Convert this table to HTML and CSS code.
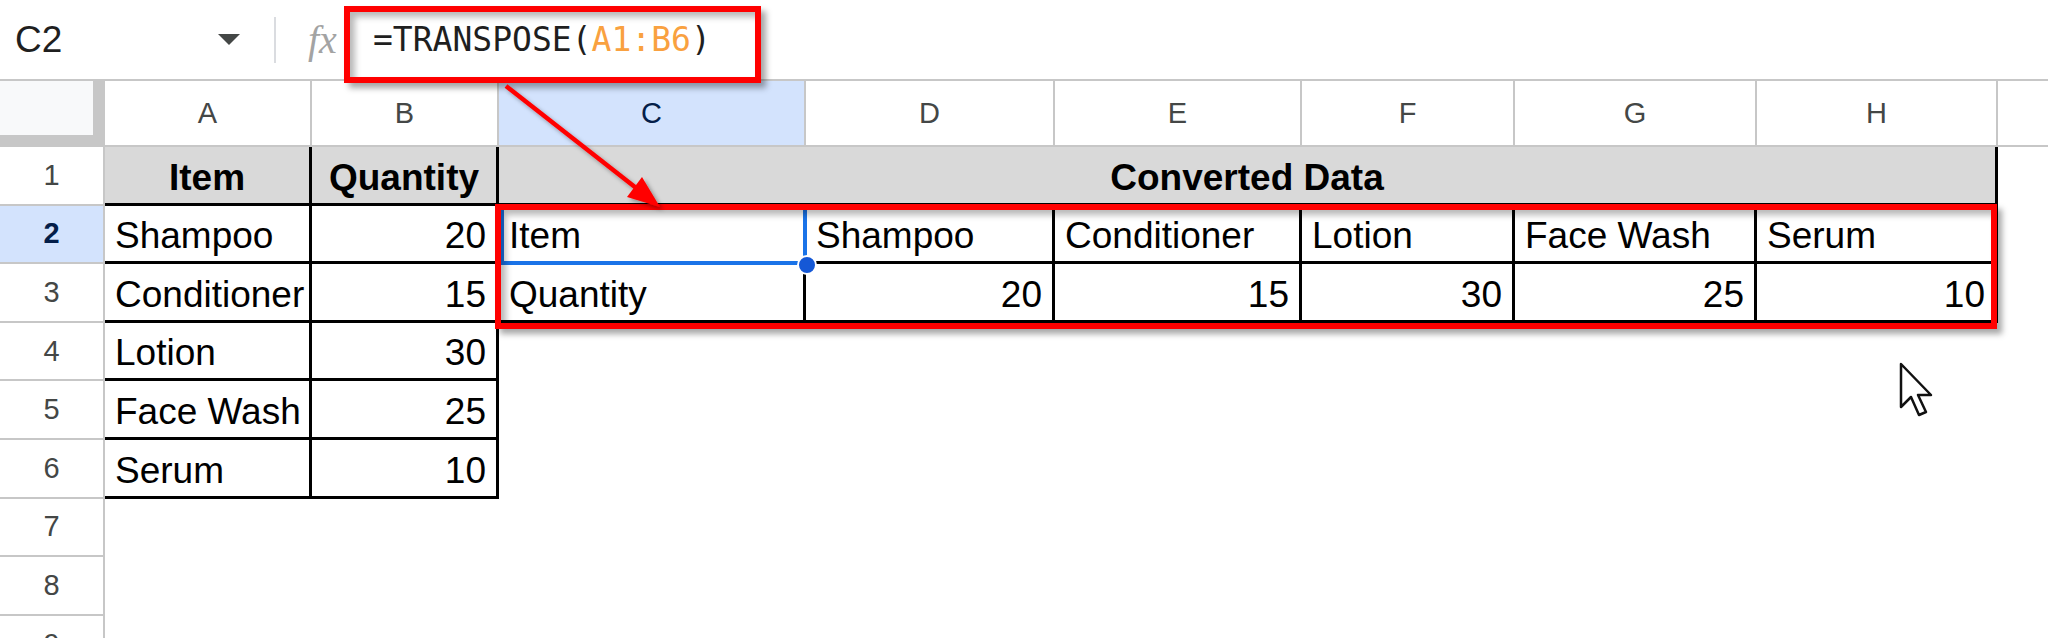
FILE: index.html
```html
<!DOCTYPE html>
<html>
<head>
<meta charset="utf-8">
<link rel="stylesheet" href="styles.css">
</head>
<body>
<div class="app">
  <div class="toolbar">
    <div class="namebox"><span>C2</span><span class="caret"></span></div>
    <div class="sep"></div>
    <div class="fx">fx</div>
    <div class="formula">=TRANSPOSE(<span class="rng">A1:B6</span>)</div>
  </div>

  <div class="sheet">
    <div class="corner"></div>
    <div class="ch">A</div>
    <div class="ch">B</div>
    <div class="ch sel-col">C</div>
    <div class="ch">D</div>
    <div class="ch">E</div>
    <div class="ch">F</div>
    <div class="ch">G</div>
    <div class="ch">H</div>
    <div class="ch last"></div>

    <div class="rh">1</div>
    <div class="c b h">Item</div>
    <div class="c b h">Quantity</div>
    <div class="c b h span6">Converted Data</div>
    <div class="c"></div>

    <div class="rh sel-h">2</div>
    <div class="c b">Shampoo</div>
    <div class="c b n">20</div>
    <div class="c b">Item</div>
    <div class="c b">Shampoo</div>
    <div class="c b">Conditioner</div>
    <div class="c b">Lotion</div>
    <div class="c b">Face Wash</div>
    <div class="c b">Serum</div>
    <div class="c"></div>

    <div class="rh">3</div>
    <div class="c b">Conditioner</div>
    <div class="c b n">15</div>
    <div class="c b">Quantity</div>
    <div class="c b n">20</div>
    <div class="c b n">15</div>
    <div class="c b n">30</div>
    <div class="c b n">25</div>
    <div class="c b n">10</div>
    <div class="c"></div>

    <div class="rh">4</div>
    <div class="c b">Lotion</div>
    <div class="c b n">30</div>
    <div class="c span7"></div>

    <div class="rh">5</div>
    <div class="c b">Face Wash</div>
    <div class="c b n">25</div>
    <div class="c span7"></div>

    <div class="rh">6</div>
    <div class="c b">Serum</div>
    <div class="c b n">10</div>
    <div class="c span7"></div>

    <div class="rh">7</div>
    <div class="c span9"></div>
    <div class="rh">8</div>
    <div class="c span9"></div>
    <div class="rh">9</div>
    <div class="c span9"></div>
  </div>

  <div class="selection"><div class="handle"></div></div>
  <div class="callout callout-formula"></div>
  <div class="callout callout-range"></div>

  <svg class="arrow" width="2048" height="638" viewBox="0 0 2048 638">
    <defs>
      <filter id="sh" x="-20%" y="-20%" width="140%" height="140%">
        <feDropShadow dx="3" dy="3" stdDeviation="2" flood-color="#000" flood-opacity="0.35"/>
      </filter>
    </defs>
    <g filter="url(#sh)">
      <line x1="506" y1="86" x2="640" y2="191" stroke="#ff0000" stroke-width="4.5"/>
      <polygon points="660,207 627,197 642,177" fill="#ff0000"/>
    </g>
  </svg>

  <svg class="cursor" width="36" height="56" viewBox="0 0 36 56">
    <path d="M2 2 L2 45 L12 35 L20 53 L27 50 L19 33 L32 33 Z" fill="#fff" stroke="#111" stroke-width="2.5" stroke-linejoin="round"/>
  </svg>
</div>
</body>
</html>
```

FILE: styles.css
```css
* {
  box-sizing: border-box;
  margin: 0;
  padding: 0;
}

html, body {
  width: 2048px;
  height: 638px;
  overflow: hidden;
  background: #ffffff;
}

body {
  font-family: "Liberation Sans", Arial, sans-serif;
  color: #000000;
}

.app {
  position: relative;
  width: 2048px;
  height: 638px;
  overflow: hidden;
}

/* ---------- formula toolbar ---------- */
.toolbar {
  height: 79px;
  display: flex;
  align-items: center;
}

.namebox {
  width: 258px;
  padding: 0 18px 0 15px;
  display: flex;
  align-items: center;
  justify-content: space-between;
  font-size: 37px;
  color: #1f1f1f;
}

.caret {
  width: 0;
  height: 0;
  border-left: 11px solid transparent;
  border-right: 11px solid transparent;
  border-top: 11px solid #444746;
}

.sep {
  width: 2px;
  height: 46px;
  margin-left: 16px;
  background: #dadce0;
}

.fx {
  width: 36px;
  margin-left: 32px;
  font-family: "Liberation Serif", "Times New Roman", serif;
  font-style: italic;
  font-size: 40px;
  color: #a3a3a3;
}

.formula {
  margin-left: 29px;
  font-family: "DejaVu Sans Mono", "Liberation Mono", monospace;
  font-size: 33px;
  color: #1f1f1f;
  white-space: nowrap;
}

.rng {
  color: #f9a140;
}

/* ---------- sheet grid ---------- */
.sheet {
  display: grid;
  grid-template-columns: 105px 207px 187px 307px 249px 247px 213px 242px 241px 1fr;
  grid-template-rows: 66px repeat(9, 58.6px);
  border-top: 2px solid #c7c7c7;
}

.corner {
  background: #f8f9fa;
  border-right: 12px solid #c7c7c7;
  border-bottom: 12px solid #c7c7c7;
}

.ch {
  display: flex;
  align-items: center;
  justify-content: center;
  border-right: 2px solid #c7c7c7;
  border-bottom: 2px solid #c7c7c7;
  font-size: 29px;
  color: #444746;
}

.ch.last {
  border-right: none;
}

.rh {
  display: flex;
  align-items: center;
  justify-content: center;
  border-right: 2px solid #c7c7c7;
  border-bottom: 2px solid #c7c7c7;
  font-size: 29px;
  color: #444746;
}

.sel-col {
  background: #d3e3fd;
  color: #041e49;
}

.sel-h {
  background: #d3e3fd;
  color: #041e49;
  font-weight: bold;
}

.c {
  display: flex;
  align-items: flex-end;
  padding: 0 10px 7px 10px;
  font-size: 37px;
  line-height: 1;
  white-space: nowrap;
  overflow: hidden;
  color: #000000;
}

.c.b {
  border-right: 3px solid #000000;
  border-bottom: 3px solid #000000;
}

.c.h {
  background: #d9d9d9;
  font-weight: bold;
  justify-content: center;
}

.c.n {
  justify-content: flex-end;
}

.span6 { grid-column: span 6; }
.span7 { grid-column: span 7; }
.span9 { grid-column: span 9; }

/* ---------- overlays ---------- */
.selection {
  position: absolute;
  left: 500px;
  top: 205px;
  width: 307px;
  height: 60px;
  border: 4px solid #1a73e8;
}

.handle {
  position: absolute;
  right: -14px;
  bottom: -14px;
  width: 20px;
  height: 20px;
  border-radius: 50%;
  background: #1558d6;
  border: 2px solid #ffffff;
}

.callout {
  position: absolute;
  border: 6px solid #ff0000;
  box-shadow: 5px 5px 6px rgba(0, 0, 0, 0.35), inset 5px 5px 6px rgba(0, 0, 0, 0.28);
}

.callout-formula {
  left: 344px;
  top: 6px;
  width: 417px;
  height: 77px;
}

.callout-range {
  left: 495px;
  top: 204px;
  width: 1502px;
  height: 125px;
}

.arrow {
  position: absolute;
  left: 0;
  top: 0;
  pointer-events: none;
}

.cursor {
  position: absolute;
  left: 1899px;
  top: 362px;
}
```
